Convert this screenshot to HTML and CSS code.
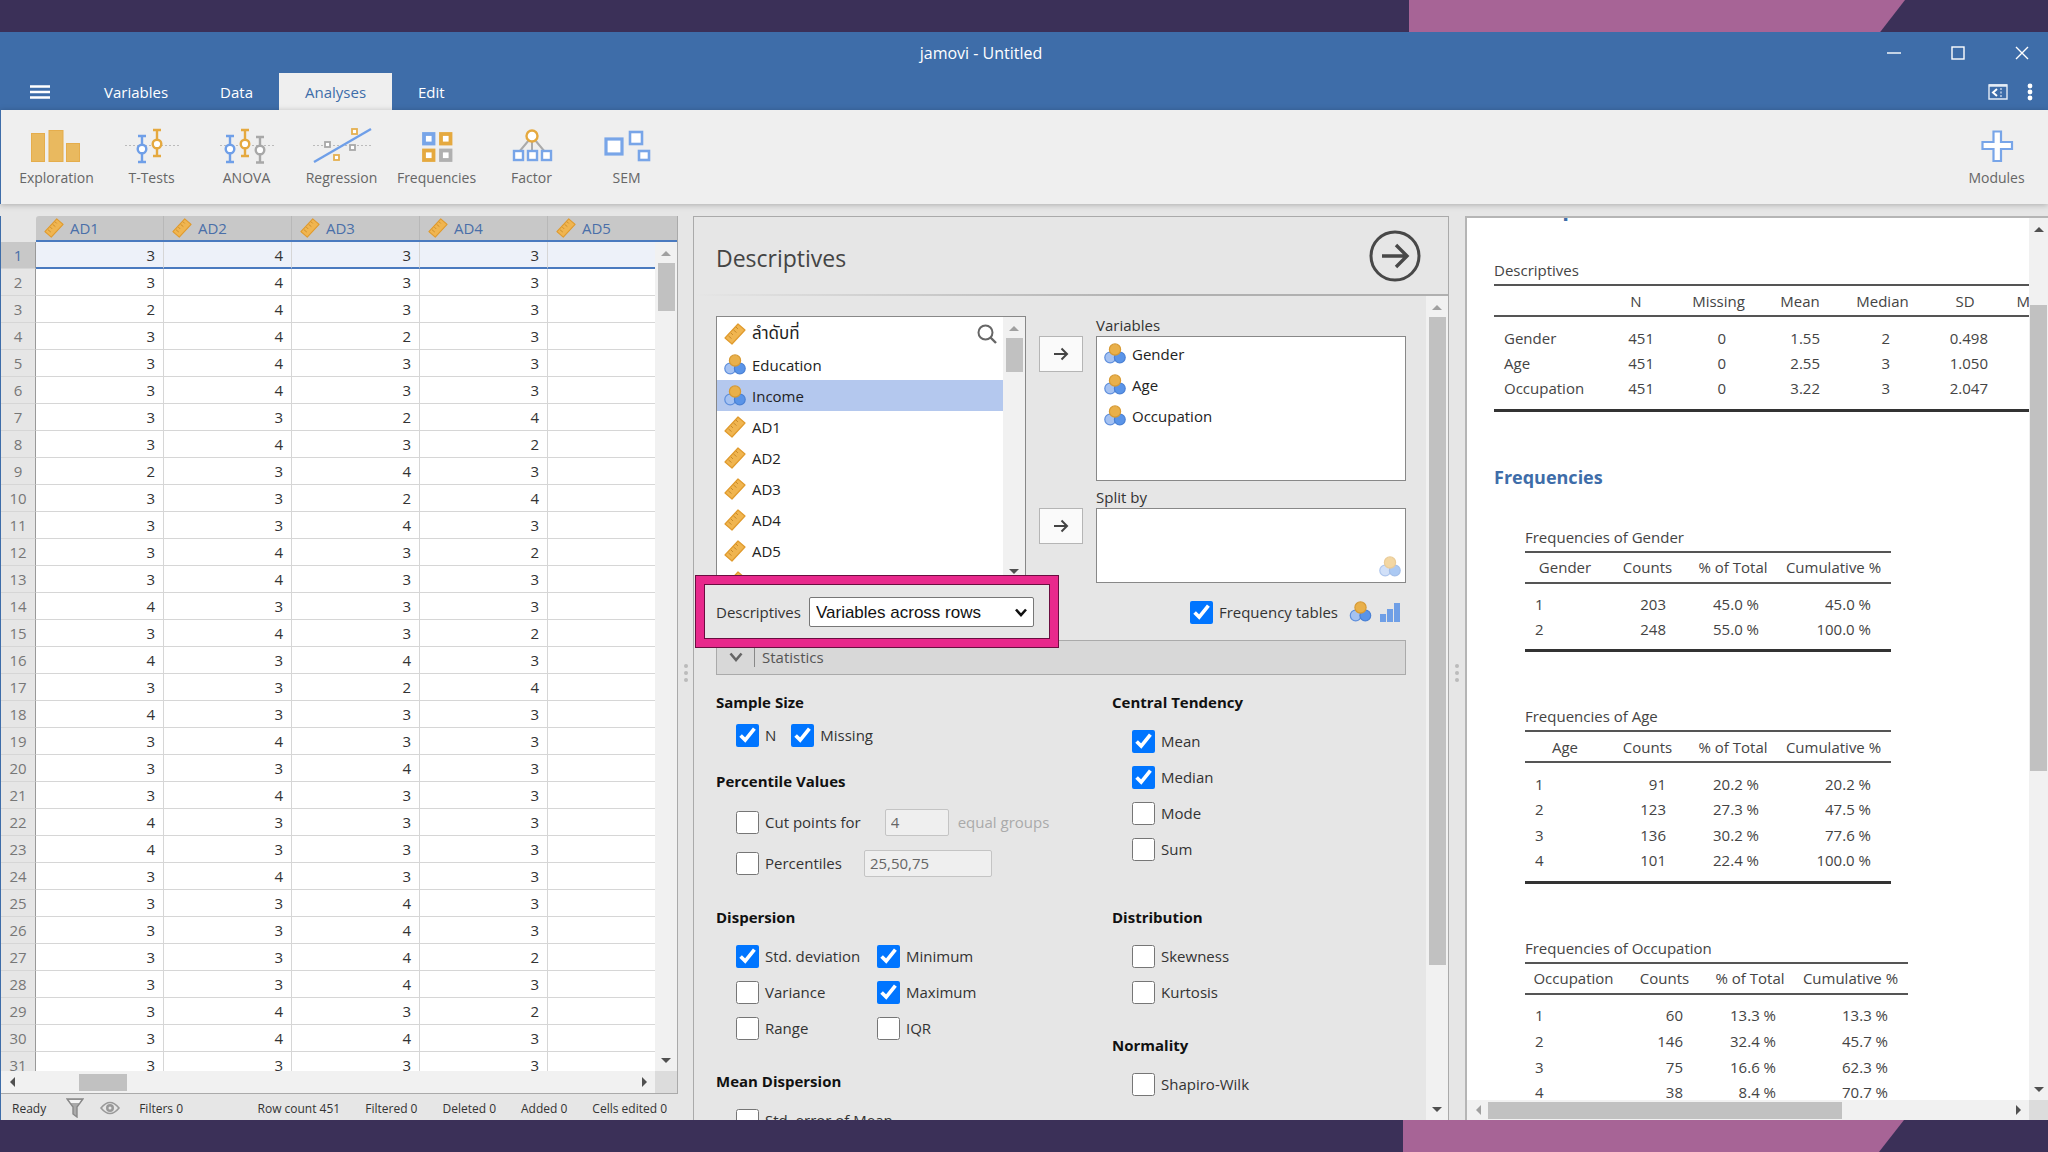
FILE: index.html
```html
<!DOCTYPE html>
<html lang="en">
<head>
  <meta charset="UTF-8">
  <meta name="viewport" content="width=device-width, initial-scale=1.0">
  <title>jamovi - Untitled</title>
  <link rel="stylesheet" href="styles.css">
</head>
<body>
  <!-- shared icons -->
  <svg class="sprite" aria-hidden="true">
    <symbol id="ruler" viewBox="0 0 22 22">
      <path d="M14 1 L21 7 L8 21 L1 15 Z" fill="#f0b550" stroke="#e09a2c" stroke-width="1.2" stroke-linejoin="round"/>
      <path d="M12 4 l2 2 M9.5 7 l3 2.5 M7 10 l2 2 M4.5 13 l3 2.5" stroke="#c98c2b" stroke-width="1" fill="none"/>
    </symbol>
    <symbol id="nominal" viewBox="0 0 22 22">
      <circle cx="6.2" cy="14.5" r="5.4" fill="#a5c2f2" stroke="#5f8fdc" stroke-width="1.2"/>
      <circle cx="15.8" cy="14.5" r="5.4" fill="#5a94e8" stroke="#4a80d4" stroke-width="1.2"/>
      <circle cx="11" cy="6.5" r="5.6" fill="#e9b04a" stroke="#d79a34" stroke-width="1.2"/>
    </symbol>
    <symbol id="arrow" viewBox="0 0 16 14">
      <path d="M1 7 H14 M8.5 1.5 L14 7 L8.5 12.5" fill="none" stroke="#444" stroke-width="2"/>
    </symbol>
  </svg>

  <div class="strip strip-top"></div>

  <div class="window">
    <header class="titlebar">
      <div class="title">jamovi - Untitled</div>
      <div class="window-buttons">
        <button type="button" aria-label="Minimize"><svg width="14" height="14"><path d="M0 7 H14" stroke="#fff" stroke-width="1.4"/></svg></button>
        <button type="button" aria-label="Maximize"><svg width="14" height="14"><rect x="1" y="1" width="12" height="12" fill="none" stroke="#fff" stroke-width="1.4"/></svg></button>
        <button type="button" aria-label="Close"><svg width="14" height="14"><path d="M1 1 L13 13 M13 1 L1 13" stroke="#fff" stroke-width="1.4"/></svg></button>
      </div>
    </header>

    <nav class="tabs">
      <button type="button" class="menu" aria-label="Menu"><svg width="20" height="14"><path d="M0 1.5 H20 M0 7 H20 M0 12.5 H20" stroke="#fff" stroke-width="2.4"/></svg></button>
      <button type="button" class="tab">Variables</button>
      <button type="button" class="tab">Data</button>
      <button type="button" class="tab active">Analyses</button>
      <button type="button" class="tab">Edit</button>
      <div class="tab-tools">
        <button type="button" aria-label="Toggle results"><svg width="20" height="18"><path d="M1 2 H19 V16 H1 Z" fill="none" stroke="#e4ecf6" stroke-width="1.4"/><path d="M1 2.5 H19" stroke="#e4ecf6" stroke-width="2.5"/><path d="M9 6 L5 9.5 L9 13" fill="none" stroke="#fff" stroke-width="2"/><path d="M13 5 V16" stroke="#c5d5ea" stroke-width="1.4" stroke-dasharray="2 1.5"/></svg></button>
        <button type="button" aria-label="More"><svg width="6" height="18"><circle cx="3" cy="3" r="2.4" fill="#fff"/><circle cx="3" cy="9" r="2.4" fill="#fff"/><circle cx="3" cy="15" r="2.4" fill="#fff"/></svg></button>
      </div>
    </nav>

    <div class="ribbon">
      <button type="button" class="analysis">
        <svg width="60" height="40"><g fill="#e9b95f" stroke="#e5ad4c"><rect x="4.500" y="9.500" width="13" height="28"/><rect x="22" y="6.500" width="14" height="31"/><rect x="39.500" y="19.500" width="13" height="18"/></g></svg>
        <span>Exploration</span>
      </button>
      <button type="button" class="analysis">
        <svg width="60" height="40"><path d="M3 21.500 H58" stroke="#bbb" stroke-dasharray="2 2"/><g fill="#fff" stroke="#6f9fe8" stroke-width="2.400"><path d="M20 12 V38 M16 12 H24 M16 38 H24"/><circle cx="20" cy="25" r="4.300"/></g><g fill="#fff" stroke="#e5a93f" stroke-width="2.400"><path d="M35 6 V32 M31 6 H39 M31 32 H39"/><circle cx="35" cy="20" r="4.300"/></g></svg>
        <span>T-Tests</span>
      </button>
      <button type="button" class="analysis">
        <svg width="60" height="40"><path d="M3 21.500 H58" stroke="#bbb" stroke-dasharray="2 2"/><g fill="#fff" stroke="#6f9fe8" stroke-width="2.400"><path d="M13 12 V38 M9 12 H17 M9 38 H17"/><circle cx="13" cy="25" r="4.300"/></g><g fill="#fff" stroke="#e5a93f" stroke-width="2.400"><path d="M28 6 V32 M24 6 H32 M24 32 H32"/><circle cx="28" cy="20" r="4.300"/></g><g fill="#fff" stroke="#a8a8a8" stroke-width="2.400"><path d="M43 13 V39 M39 13 H47 M39 38.500 H47"/><circle cx="43" cy="26" r="4.300"/></g></svg>
        <span>ANOVA</span>
      </button>
      <button type="button" class="analysis">
        <svg width="60" height="40"><path d="M1 21.500 H60" stroke="#bbb" stroke-dasharray="2 2"/><path d="M2 38 L59 5" stroke="#6f9fe8" stroke-width="2.400"/><g fill="#fff" stroke-width="1.800"><rect x="40" y="5" width="5" height="5" stroke="#e5b04f"/><rect x="22" y="31" width="5" height="5" stroke="#e5b04f"/><rect x="13" y="18" width="5" height="5" stroke="#a8a8a8"/><rect x="38" y="21" width="5" height="5" stroke="#a8a8a8"/></g></svg>
        <span>Regression</span>
      </button>
      <button type="button" class="analysis">
        <svg width="60" height="40"><g fill="#fff" stroke-width="3.800"><rect x="17" y="10" width="9.500" height="9.500" stroke="#78a5e8"/><rect x="34" y="10" width="9.500" height="9.500" stroke="#e5a93f"/><rect x="17" y="26.500" width="9.500" height="9.500" stroke="#e5a93f"/><rect x="34" y="26.500" width="9.500" height="9.500" stroke="#b0b0b0"/></g></svg>
        <span>Frequencies</span>
      </button>
      <button type="button" class="analysis">
        <svg width="60" height="40"><path d="M30 16 V28 M27 16 L17 28 M33 16 L43 28" stroke="#aaa" stroke-width="2"/><circle cx="30" cy="12" r="5.500" fill="#fff" stroke="#e5a93f" stroke-width="2.400"/><g fill="#fff" stroke="#78a5e8" stroke-width="2.400"><rect x="12" y="27" width="9" height="9"/><rect x="26" y="27" width="9" height="9"/><rect x="40" y="27" width="9" height="9"/></g></svg>
        <span>Factor</span>
      </button>
      <button type="button" class="analysis">
        <svg width="60" height="40"><g fill="#fff" stroke="#78a5e8"><rect x="9" y="15" width="16" height="15" stroke-width="3.200"/><rect x="33" y="8" width="12" height="12" stroke-width="2.600"/><rect x="42" y="27" width="10" height="9" stroke-width="2.600"/></g></svg>
        <span>SEM</span>
      </button>
      <button type="button" class="analysis modules">
        <svg width="60" height="40"><path d="M26.500 7.500 H34 V18 H45 V25 H34 V37 H26.500 V25 H15.500 V18 H26.500 Z" fill="#fff" stroke="#78a5e8" stroke-width="2.200"/></svg>
        <span>Modules</span>
      </button>
    </div>

    <main class="panes">
      <section class="data-pane">
        <div class="sheet">
          <div class="sheet-head">
            <span class="col-head"><svg><use href="#ruler"/></svg>AD1</span>
            <span class="col-head"><svg><use href="#ruler"/></svg>AD2</span>
            <span class="col-head"><svg><use href="#ruler"/></svg>AD3</span>
            <span class="col-head"><svg><use href="#ruler"/></svg>AD4</span>
            <span class="col-head"><svg><use href="#ruler"/></svg>AD5</span>
          </div>
          <div class="sheet-body">
            <table class="cells" aria-label="Data">
              <colgroup><col class="row-col"><col class="val-col"><col class="val-col"><col class="val-col"><col class="val-col"><col></colgroup>
              <tbody id="rows"></tbody>
            </table>
            <div class="vbar sheet-vbar"><i class="up dim"></i><b></b><i class="down"></i></div>
          </div>
          <div class="hbar sheet-hbar"><i class="left"></i><b></b><i class="right"></i><u></u></div>
        </div>
        <footer class="status">
          <span class="ready">Ready</span>
          <svg class="funnel" width="18" height="20"><path d="M1 1 H17 L11 9 V19 L7 16 V9 Z" fill="#aaa" stroke="#888" stroke-width="1.400"/><path d="M3 2 H15 L13 5 H5 Z" fill="#f4f4f4"/></svg>
          <svg class="eye" width="20" height="14"><path d="M1 7 Q10 -4 19 7 Q10 18 1 7 Z" fill="none" stroke="#999" stroke-width="1.600"/><circle cx="10" cy="7" r="4" fill="#999"/><circle cx="10" cy="7" r="1.500" fill="#e6e6e6"/></svg>
          <span class="filters">Filters 0</span>
          <span>Row count 451</span>
          <span>Filtered 0</span>
          <span>Deleted 0</span>
          <span>Added 0</span>
          <span>Cells edited 0</span>
        </footer>
      </section>

      <div class="splitter"><i></i><i></i><i></i></div>

      <section class="options-pane">
        <div class="options-head">
          <h1>Descriptives</h1>
          <button type="button" class="hide-options" aria-label="Hide options"><svg width="52" height="52"><circle cx="26" cy="26" r="24" fill="none" stroke="#484848" stroke-width="3"/><path d="M13 26 H38 M27 15 L38 26 L27 37" fill="none" stroke="#484848" stroke-width="3.400"/></svg></button>
        </div>
        <div class="options-scroll">
          <div class="options-body">
            <div class="assign">
              <div class="supplier">
                <ul class="var-list">
                  <li class="thai"><svg><use href="#ruler"/></svg>ลำดับที่</li>
                  <li><svg><use href="#nominal"/></svg>Education</li>
                  <li class="selected"><svg><use href="#nominal"/></svg>Income</li>
                  <li><svg><use href="#ruler"/></svg>AD1</li>
                  <li><svg><use href="#ruler"/></svg>AD2</li>
                  <li><svg><use href="#ruler"/></svg>AD3</li>
                  <li><svg><use href="#ruler"/></svg>AD4</li>
                  <li><svg><use href="#ruler"/></svg>AD5</li>
                  <li><svg><use href="#ruler"/></svg></li>
                </ul>
                <button type="button" class="search" aria-label="Search"><svg width="20" height="20"><circle cx="8.500" cy="8.500" r="7" fill="none" stroke="#666" stroke-width="2"/><path d="M13.500 13.500 L19 19" stroke="#666" stroke-width="2.400"/></svg></button>
                <div class="vbar"><i class="up dim"></i><b></b><i class="down"></i></div>
              </div>
              <div class="arrows">
                <button type="button" aria-label="Assign to Variables"><svg width="16" height="14"><use href="#arrow"/></svg></button>
                <button type="button" aria-label="Assign to Split by"><svg width="16" height="14"><use href="#arrow"/></svg></button>
              </div>
              <div class="targets">
                <div class="target-label">Variables</div>
                <ul class="var-list target-vars">
                  <li><svg><use href="#nominal"/></svg>Gender</li>
                  <li><svg><use href="#nominal"/></svg>Age</li>
                  <li><svg><use href="#nominal"/></svg>Occupation</li>
                </ul>
                <div class="target-label split-label">Split by</div>
                <div class="target-split"><svg><use href="#nominal"/></svg></div>
              </div>
            </div>

            <div class="layout-row">
              <div class="layout-choice">
                <label for="layout">Descriptives</label>
                <select id="layout"><option>Variables across rows</option><option>Variables across columns</option></select>
                <div class="highlight"></div>
              </div>
              <label class="check"><input type="checkbox" checked>Frequency tables
                <svg class="allowed" width="23" height="22"><use href="#nominal"/></svg>
                <svg width="20" height="20"><g fill="#6f9fe6"><rect x="0" y="12" width="6" height="8"/><rect x="7" y="7" width="6" height="13"/><rect x="14" y="1" width="6" height="19"/></g></svg>
              </label>
            </div>

            <button type="button" class="collapse"><svg width="14" height="10"><path d="M1.500 1.500 L7 8 L12.500 1.500" fill="none" stroke="#666" stroke-width="2.600"/></svg><span>Statistics</span></button>

            <div class="stats">
              <div class="stack">
                <div class="group">
                  <h2>Sample Size</h2>
                  <div class="inline-checks">
                    <label class="check"><input type="checkbox" checked>N</label>
                    <label class="check"><input type="checkbox" checked>Missing</label>
                  </div>
                </div>
                <div class="group percentile">
                  <h2>Percentile Values</h2>
                  <div class="field-row">
                    <label class="check"><input type="checkbox">Cut points for</label>
                    <input type="text" class="field cut" value="4" aria-label="Number of groups" disabled>
                    <span class="suffix">equal groups</span>
                  </div>
                  <div class="field-row">
                    <label class="check"><input type="checkbox">Percentiles</label>
                    <input type="text" class="field pct" value="25,50,75" aria-label="Percentiles" disabled>
                  </div>
                </div>
              </div>
              <div class="group">
                <h2>Central Tendency</h2>
                <div class="checks">
                  <label class="check"><input type="checkbox" checked>Mean</label>
                  <label class="check"><input type="checkbox" checked>Median</label>
                  <label class="check"><input type="checkbox">Mode</label>
                  <label class="check"><input type="checkbox">Sum</label>
                </div>
              </div>
              <div class="stack">
                <div class="group">
                  <h2>Dispersion</h2>
                  <div class="checks two">
                    <label class="check"><input type="checkbox" checked>Std. deviation</label>
                    <label class="check"><input type="checkbox" checked>Minimum</label>
                    <label class="check"><input type="checkbox">Variance</label>
                    <label class="check"><input type="checkbox" checked>Maximum</label>
                    <label class="check"><input type="checkbox">Range</label>
                    <label class="check"><input type="checkbox">IQR</label>
                  </div>
                </div>
                <div class="group">
                  <h2>Mean Dispersion</h2>
                  <div class="checks">
                    <label class="check"><input type="checkbox">Std. error of Mean</label>
                  </div>
                </div>
              </div>
              <div class="stack">
                <div class="group">
                  <h2>Distribution</h2>
                  <div class="checks">
                    <label class="check"><input type="checkbox">Skewness</label>
                    <label class="check"><input type="checkbox">Kurtosis</label>
                  </div>
                </div>
                <div class="group">
                  <h2>Normality</h2>
                  <div class="checks">
                    <label class="check"><input type="checkbox">Shapiro-Wilk</label>
                  </div>
                </div>
              </div>
            </div>
          </div>
          <div class="vbar options-vbar"><i class="up dim"></i><b></b><i class="down"></i></div>
        </div>
      </section>

      <div class="splitter"><i></i><i></i><i></i></div>

      <section class="results-pane">
        <div class="results-view">
          <div class="results">
            <h2 class="scrolled-title">Descriptives</h2>
            <table class="result desc">
              <caption>Descriptives</caption>
              <colgroup><col class="d-label"><col class="d-n"><col class="d-missing"><col class="d-mean"><col class="d-median"><col class="d-sd"><col class="d-min"></colgroup>
              <thead><tr><th></th><th>N</th><th>Missing</th><th>Mean</th><th>Median</th><th>SD</th><th>Minimum</th></tr></thead>
              <tbody>
                <tr><td>Gender</td><td>451</td><td>0</td><td>1.55</td><td>2</td><td>0.498</td><td></td></tr>
                <tr><td>Age</td><td>451</td><td>0</td><td>2.55</td><td>3</td><td>1.050</td><td></td></tr>
                <tr><td>Occupation</td><td>451</td><td>0</td><td>3.22</td><td>3</td><td>2.047</td><td></td></tr>
              </tbody>
            </table>

            <h2>Frequencies</h2>
            <table class="result freq">
              <caption>Frequencies of Gender</caption>
              <colgroup><col class="f-label"><col class="f-counts"><col class="f-total"><col class="f-cum"></colgroup>
              <thead><tr><th>Gender</th><th>Counts</th><th>% of Total</th><th>Cumulative %</th></tr></thead>
              <tbody>
                <tr><td>1</td><td>203</td><td>45.0 %</td><td>45.0 %</td></tr>
                <tr><td>2</td><td>248</td><td>55.0 %</td><td>100.0 %</td></tr>
              </tbody>
            </table>
            <table class="result freq">
              <caption>Frequencies of Age</caption>
              <colgroup><col class="f-label"><col class="f-counts"><col class="f-total"><col class="f-cum"></colgroup>
              <thead><tr><th>Age</th><th>Counts</th><th>% of Total</th><th>Cumulative %</th></tr></thead>
              <tbody>
                <tr><td>1</td><td>91</td><td>20.2 %</td><td>20.2 %</td></tr>
                <tr><td>2</td><td>123</td><td>27.3 %</td><td>47.5 %</td></tr>
                <tr><td>3</td><td>136</td><td>30.2 %</td><td>77.6 %</td></tr>
                <tr><td>4</td><td>101</td><td>22.4 %</td><td>100.0 %</td></tr>
              </tbody>
            </table>
            <table class="result freq wide">
              <caption>Frequencies of Occupation</caption>
              <colgroup><col class="f-label"><col class="f-counts"><col class="f-total"><col class="f-cum"></colgroup>
              <thead><tr><th>Occupation</th><th>Counts</th><th>% of Total</th><th>Cumulative %</th></tr></thead>
              <tbody>
                <tr><td>1</td><td>60</td><td>13.3 %</td><td>13.3 %</td></tr>
                <tr><td>2</td><td>146</td><td>32.4 %</td><td>45.7 %</td></tr>
                <tr><td>3</td><td>75</td><td>16.6 %</td><td>62.3 %</td></tr>
                <tr><td>4</td><td>38</td><td>8.4 %</td><td>70.7 %</td></tr>
              </tbody>
            </table>
          </div>
          <div class="vbar results-vbar"><i class="up"></i><b></b><i class="down"></i></div>
        </div>
        <div class="hbar results-hbar"><i class="left dim"></i><b></b><i class="right"></i><u></u></div>
      </section>
    </main>
  </div>

  <div class="strip strip-bottom"></div>
  <script src="data.js"></script>
</body>
</html>
```

FILE: data.js
```js
// AD1..AD4 for the rows in view
const data = [
  '3433', '3433', '2433', '3423', '3433', '3433', '3324', '3432',
  '2343', '3324', '3343', '3432', '3433', '4333', '3432', '4343',
  '3324', '4333', '3433', '3343', '3433', '4333', '4333', '3433',
  '3343', '3343', '3342', '3343', '3432', '3443', '3333'
];

const body = document.getElementById('rows');

data.forEach((values, i) => {
  const row = body.insertRow();
  if (i === 0) row.className = 'current';
  const head = document.createElement('th');
  head.scope = 'row';
  head.textContent = i + 1;
  row.appendChild(head);
  for (const value of values) row.insertCell().textContent = value;
  row.insertCell();
});
```

FILE: styles.css
```css
* {
  box-sizing: border-box;
}

body {
  margin: 0;
  height: 100vh;
  display: flex;
  flex-direction: column;
  overflow: hidden;
  font-family: "Open Sans", "Noto Sans", "Noto Sans Thai", sans-serif;
  font-size: 15px;
  color: #333;
  background: #3b3058;
}

button, input, select {
  font-family: inherit;
  font-size: inherit;
  color: inherit;
}

button {
  background: none;
  border: none;
  padding: 0;
}

svg {
  display: block;
  flex: none;
}

ul {
  list-style: none;
  margin: 0;
  padding: 0;
}

.sprite {
  position: absolute;
  width: 0;
  height: 0;
}

/* slide background above and below the window */
.strip {
  flex: none;
  height: 32px;
}

.strip::before {
  content: "";
  display: block;
  height: 32px;
  width: 496px;
  margin-left: 1409px;
  background: #a76496;
  clip-path: polygon(0 0, 100% 0, 95% 100%, 0 100%);
}

.strip-bottom::before {
  width: 501px;
  margin-left: 1403px;
}

.window {
  flex: 1;
  min-height: 0;
  display: flex;
  flex-direction: column;
  background: #e6e6e6;
}

/* title bar and tabs */
.titlebar {
  flex: none;
  height: 41px;
  background: #3e6da9;
  color: #fff;
  display: grid;
  grid-template-columns: 1fr auto 1fr;
  align-items: center;
}

.title {
  grid-column: 2;
  margin-right: 86px;
  font-size: 16px;
}

.window-buttons {
  justify-self: end;
  display: flex;
  gap: 50px;
  padding-right: 19px;
}

.tabs {
  flex: none;
  height: 37px;
  display: flex;
  background: #3e6da9;
}

.menu {
  width: 78px;
  padding-left: 30px;
}

.tab {
  padding: 0 26px;
  color: #fff;
}

.tab.active {
  background: #efefef;
  color: #3e6da9;
}

.tab-tools {
  margin-left: auto;
  display: flex;
  align-items: center;
  gap: 19px;
  padding-right: 15px;
}

/* ribbon */
.ribbon {
  flex: none;
  height: 94px;
  display: flex;
  padding: 14px 4px 0 8px;
  background: #efefef;
  box-shadow: 0 1px 6px rgba(0, 0, 0, 0.25);
  border-left: 1px solid #3e6da9;
}

.analysis {
  width: 95px;
  display: flex;
  flex-direction: column;
  align-items: center;
  gap: 4px;
  font-size: 14px;
  color: #666;
}

.modules {
  margin-left: auto;
}

/* three panes */
.panes {
  flex: 1;
  min-height: 0;
  display: grid;
  grid-template-columns: minmax(0, 678fr) 15px minmax(0, 756fr) 16px minmax(0, 583fr);
  padding-top: 12px;
}

.splitter {
  display: flex;
  flex-direction: column;
  align-items: center;
  justify-content: center;
  gap: 3px;
  padding-top: 9px;
}

.splitter i {
  width: 4px;
  height: 4px;
  border-radius: 2px;
  background: #bbb;
}

/* scroll bars */
.vbar {
  width: 22px;
  flex: none;
  display: flex;
  flex-direction: column;
  align-items: center;
  padding: 9px 0 8px;
  background: #f1f1f1;
}

.vbar b {
  width: 17px;
  margin-top: 7px;
  background: #c1c1c1;
}

.hbar {
  height: 22px;
  flex: none;
  display: flex;
  align-items: center;
  background: #f1f1f1;
}

.hbar b {
  height: 17px;
  background: #c1c1c1;
}

.hbar u {
  align-self: stretch;
  width: 22px;
  background: #dcdcdc;
}

.up, .down {
  border: 5px solid transparent;
}

.up {
  border-top: none;
  border-bottom-color: #505050;
}

.down {
  border-bottom: none;
  border-top-color: #505050;
  margin-top: auto;
}

.left, .right {
  border: 5px solid transparent;
}

.left {
  border-left: none;
  border-right-color: #505050;
  margin-left: 9px;
}

.right {
  border-right: none;
  border-left-color: #505050;
  margin-left: auto;
  margin-right: 8px;
}

.up.dim {
  border-bottom-color: #a0a0a0;
}

.left.dim {
  border-right-color: #a0a0a0;
}

/* data sheet */
.data-pane {
  display: flex;
  flex-direction: column;
  min-height: 0;
  border-left: 1px solid #3e6da9;
}

.sheet {
  flex: 1;
  min-height: 0;
  display: flex;
  flex-direction: column;
  border-right: 1px solid #aaa;
  border-bottom: 1px solid #aaa;
}

.sheet-head {
  flex: none;
  height: 26px;
  margin-left: 35px;
  display: flex;
  overflow: hidden;
  background: #c8c8c8;
  border-bottom: 2px solid #4a7abf;
  border-radius: 3px 0 0 0;
}

.col-head {
  flex: 0 0 128px;
  display: flex;
  align-items: center;
  gap: 6px;
  padding-left: 8px;
  border-right: 1px solid #b8b8b8;
  color: #4a6fa8;
}

.col-head svg {
  width: 20px;
  height: 20px;
}

.col-head:last-child {
  border-right: none;
}

.sheet-body {
  flex: 1;
  min-height: 0;
  display: flex;
  overflow: hidden;
}

.cells {
  flex: 1;
  table-layout: fixed;
  border-collapse: separate;
  border-spacing: 0;
  height: 837px;
}

.row-col {
  width: 35px;
}

.val-col {
  width: 128px;
}

.cells th, .cells td {
  height: 27px;
  padding: 0;
  line-height: 22px;
  border-right: 1px solid #d6d6d6;
  border-bottom: 1px solid #d6d6d6;
}

.cells th {
  font-weight: normal;
  color: #777;
  text-align: center;
  background: #e6e6e6;
  border-right-color: #999;
}

.cells td {
  background: #fff;
  text-align: right;
  padding-right: 8px;
}

.cells td:last-child {
  border-right: none;
}

.cells .current th {
  background: #c8c8c8;
  color: #4a6fa8;
}

.cells .current td {
  background: #edf1f9;
  border-bottom: 2px solid #4a7abf;
}

.sheet-vbar b {
  height: 48px;
}

.sheet-hbar b {
  width: 48px;
  margin-left: 64px;
}

.status {
  flex: none;
  height: 26px;
  display: flex;
  align-items: center;
  gap: 25px;
  padding: 2px 11px 0 11px;
  font-size: 12px;
  white-space: nowrap;
}

.funnel {
  margin: 0 -1px 0 -5px;
}

.eye {
  margin: 0 -6px 0 -8px;
}

.filters {
  margin-right: auto;
}

/* options */
.options-pane {
  display: flex;
  flex-direction: column;
  min-height: 0;
  border: 1px solid #aaa;
  border-bottom: none;
}

.options-head {
  flex: none;
  height: 79px;
  display: flex;
  align-items: center;
  justify-content: space-between;
  padding: 0 27px 0 22px;
  border-bottom: 2px solid;
  border-image: linear-gradient(to right, #e6e6e6, #b0b0b0 60%) 1;
}

.options-head h1 {
  margin: 0;
  padding-top: 4px;
  font-size: 23px;
  font-weight: normal;
  color: #444;
}

.options-scroll {
  flex: 1;
  min-height: 0;
  display: flex;
  overflow: hidden;
}

.options-body {
  flex: 1;
  min-width: 0;
  padding: 20px 20px 0 22px;
}

.options-vbar b {
  height: 648px;
}

.assign {
  display: grid;
  grid-template-columns: 1fr 44px 1fr;
  gap: 13px;
}

.supplier {
  position: relative;
  display: flex;
  height: 267px;
  overflow: hidden;
  background: #fff;
  border: 1px solid #888;
}

.supplier .var-list {
  flex: 1;
  padding-top: 1px;
}

.supplier .vbar b {
  height: 34px;
}

.var-list li {
  display: flex;
  align-items: center;
  gap: 6px;
  height: 31px;
  padding-left: 7px;
  color: #222;
}

.var-list svg {
  width: 22px;
  height: 22px;
}

.var-list .selected {
  background: #b4c8ee;
}

.var-list .thai {
  font-size: 17px;
}

.search {
  position: absolute;
  top: 7px;
  right: 28px;
}

.arrows {
  display: flex;
  flex-direction: column;
  gap: 136px;
  padding-top: 20px;
}

.arrows button {
  height: 36px;
  display: flex;
  align-items: center;
  justify-content: center;
  background: #fafafa;
  border: 1px solid #b5b5b5;
}

.target-label {
  line-height: 18px;
  padding-bottom: 2px;
}

.split-label {
  padding-top: 7px;
}

.target-vars {
  height: 145px;
  padding-top: 1px;
  background: #fff;
  border: 1px solid #888;
}

.target-split {
  height: 75px;
  display: flex;
  align-items: flex-end;
  justify-content: flex-end;
  padding: 4px;
  background: #fff;
  border: 1px solid #888;
}

.target-split svg {
  width: 22px;
  height: 22px;
  opacity: 0.5;
}

.layout-row {
  display: flex;
  justify-content: space-between;
  align-items: center;
  margin: 14px 0 13px;
  padding-right: 6px;
}

.layout-choice {
  position: relative;
  display: flex;
  align-items: center;
  gap: 8px;
}

.layout-choice select {
  appearance: none;
  width: 225px;
  height: 30px;
  padding: 0 6px;
  font-family: "Liberation Sans", Arial, sans-serif;
  font-size: 17px;
  color: #111;
  background: #fff url("data:image/svg+xml,%3Csvg xmlns='http://www.w3.org/2000/svg' width='12' height='9'%3E%3Cpath d='M1 1.500 L6 7 L11 1.500' fill='none' stroke='%23111' stroke-width='2.600'/%3E%3C/svg%3E") no-repeat right 6px center;
  border: 1px solid #777;
  border-radius: 2px;
}

/* callout frame round the drop-down */
.highlight {
  position: absolute;
  inset: -22px -25px -21px -21px;
  border: 9px solid #e8298c;
  outline: 1px solid #6b0d40;
  outline-offset: -1px;
  box-shadow: inset 0 0 0 1px #6b0d40;
  pointer-events: none;
}

.check {
  display: flex;
  align-items: center;
  gap: 6px;
  height: 24px;
  white-space: nowrap;
}

.check input {
  width: 23px;
  height: 23px;
  margin: 0;
  accent-color: #0075ff;
}

.check .allowed {
  margin: 0 2px 0 5px;
}

.collapse {
  width: 100%;
  height: 35px;
  display: flex;
  align-items: center;
  gap: 11px;
  padding: 0 0 2px 12px;
  background: #d8d8d8;
  border: 1px solid #aaa;
  color: #555;
}

.collapse span {
  border-left: 1px solid #888;
  padding-left: 7px;
  line-height: 20px;
}

.stats {
  display: grid;
  grid-template-columns: 396fr 294fr;
  row-gap: 30px;
  padding-top: 15px;
}

.stack {
  display: flex;
  flex-direction: column;
  gap: 29px;
}

.percentile {
  margin-top: -7px;
}

.group h2 {
  margin: 0;
  font-size: 15px;
  font-weight: bold;
  line-height: 24px;
  color: #111;
}

.checks {
  display: grid;
  row-gap: 12px;
  padding: 15px 0 0 20px;
}

.checks.two {
  grid-template-columns: 141px 1fr;
}

.inline-checks {
  display: flex;
  gap: 15px;
  padding: 9px 0 0 20px;
}

.field-row {
  display: flex;
  align-items: center;
  height: 24px;
  margin-top: 17px;
  padding-left: 20px;
}

.field {
  height: 27px;
  padding: 0 5px;
  background: #efefef;
  border: 1px solid #c4c4c4;
  border-radius: 2px;
  color: #666;
}

.cut {
  width: 64px;
  margin: 0 9px 0 24px;
}

.pct {
  width: 128px;
  margin-left: 22px;
}

.suffix {
  color: #aaa;
}

/* results */
.results-pane {
  display: flex;
  flex-direction: column;
  min-height: 0;
  border-top: 2px solid #b5b5b5;
  border-left: 2px solid #b5b5b5;
}

.results-view {
  flex: 1;
  min-height: 0;
  display: flex;
  overflow: hidden;
}

.results {
  flex: 1;
  min-width: 0;
  overflow: hidden;
  padding-left: 27px;
  background: #fff;
  color: #444;
}

.results h2 {
  margin: 51px 0 35px;
  font-size: 18px;
  line-height: 28px;
  color: #3e6da9;
}

.results .scrolled-title {
  margin: -25px 0 38px;
  font-size: 22px;
}

.result {
  table-layout: fixed;
  border-collapse: collapse;
  border-bottom: 3px solid #333;
}

.result caption {
  text-align: left;
  line-height: 22px;
  padding-bottom: 3px;
  white-space: nowrap;
}

.result th {
  height: 31px;
  padding: 0;
  font-weight: normal;
  border-top: 2px solid #555;
  border-bottom: 2px solid #555;
}

.result td {
  height: 26px;
  padding: 0;
  line-height: 20px;
  text-align: right;
}

.result td:first-child {
  text-align: left;
  padding-left: 10px;
}

.result tbody tr:first-child td {
  height: 34px;
  padding-top: 8px;
}

.result tbody tr:last-child td {
  height: 34px;
  padding-bottom: 8px;
}

.desc {
  width: 612px;
}

.d-label { width: 112px; }
.d-n { width: 60px; }
.d-missing { width: 105px; }
.d-mean { width: 58px; }
.d-median { width: 107px; }
.d-sd { width: 58px; }
.d-min { width: 112px; }

.desc td:nth-child(2) { padding-right: 12px; }
.desc td:nth-child(3) { padding-right: 45px; }
.desc td:nth-child(4) { padding-right: 9px; }
.desc td:nth-child(5) { padding-right: 46px; }
.desc td:nth-child(6) { padding-right: 6px; }

.freq {
  width: 366px;
  margin: 0 0 53px 31px;
}

.freq.wide {
  width: 383px;
}

.f-counts { width: 85px; }
.f-total { width: 86px; }
.f-cum { width: 115px; }

.freq td:nth-child(2) { padding-right: 24px; }
.freq td:nth-child(3) { padding-right: 17px; }
.freq td:nth-child(4) { padding-right: 20px; }

.results-vbar {
  width: 19px;
}

.results-vbar b {
  height: 466px;
  margin-top: 73px;
}

.results-hbar {
  height: 20px;
}

.results-hbar u {
  width: 19px;
}

.results-hbar b {
  width: 354px;
  margin-left: 7px;
}
```
